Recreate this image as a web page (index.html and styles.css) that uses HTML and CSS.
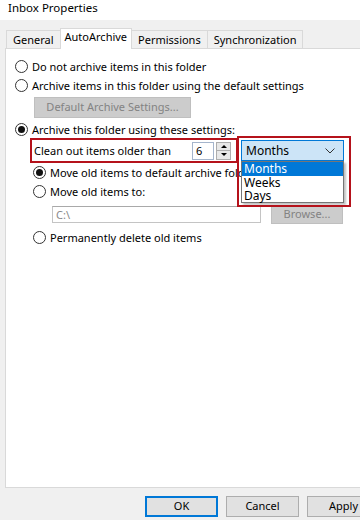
FILE: index.html
```html
<!DOCTYPE html>
<html lang="en">
<head>
    <meta charset="UTF-8">
    <meta name="viewport" content="width=device-width, initial-scale=1.0">
    <title>Inbox Properties</title>
    <link rel="stylesheet" href="styles.css">
</head>
<body>
    <div class="dialog">
        <div class="titlebar">Inbox Properties</div>
        <div class="tabs">
            <div class="tab">General</div>
            <div class="tab active">AutoArchive</div>
            <div class="tab">Permissions</div>
            <div class="tab">Synchronization</div>
        </div>
        <div class="panel">
            <label class="radio-row"><span class="radio"></span>Do not archive items in this folder</label>
            <label class="radio-row"><span class="radio"></span>Archive items in this folder using the default settings</label>
            <div class="btn disabled default-btn">Default Archive Settings...</div>
            <label class="radio-row top-gap"><span class="radio checked"></span>Archive this folder using these settings:</label>

            <div class="clean-row">
                <div class="mark-box">
                    <span>Clean out items older than</span>
                    <div class="spin">
                        <div class="spin-input">6</div>
                        <div class="spin-btns">
                            <div class="spin-btn"><span class="tri-up"></span></div>
                            <div class="spin-btn"><span class="tri-down"></span></div>
                        </div>
                    </div>
                </div>
                <div class="select">
                    <span>Months</span>
                    <svg class="chevron" width="10" height="6" viewBox="0 0 10 6">
                        <polyline points="0.5,0.5 5,5 9.5,0.5" fill="none" stroke="#333" stroke-width="1"/>
                    </svg>
                    <div class="select-list">
                        <div class="option selected">Months</div>
                        <div class="option">Weeks</div>
                        <div class="option">Days</div>
                    </div>
                    <div class="mark-popup"></div>
                </div>
            </div>

            <div class="sub">
                <label class="radio-row"><span class="radio checked"></span>Move old items to default archive folder</label>
                <label class="radio-row"><span class="radio"></span>Move old items to:</label>
                <div class="path-row">
                    <div class="path-input">C:\</div>
                    <div class="btn disabled browse-btn">Browse...</div>
                </div>
                <label class="radio-row perm"><span class="radio"></span>Permanently delete old items</label>
            </div>
        </div>
        <div class="footer">
            <div class="btn focus">OK</div>
            <div class="btn">Cancel</div>
            <div class="btn">Apply</div>
        </div>
    </div>
</body>
</html>
```

FILE: styles.css
```css
body {
    margin: 0;
    background-color: #f0f0f0;
    font-family: "Noto Sans", "Liberation Sans", sans-serif;
    font-size: 11px;
    color: #000000;
    overflow: hidden;
}
.dialog {
    width: 420px;
}
.titlebar {
    height: 20px;
    box-sizing: border-box;
    padding: 1px 0 0 8px;
    line-height: 14px;
    font-size: 11.5px;
    background-color: #ffffff;
}
.tabs {
    display: flex;
    align-items: flex-end;
    height: 28px;
    padding-left: 6px;
    position: relative;
    z-index: 1;
}
.tab {
    height: 18px;
    line-height: 17px;
    padding: 0 6px;
    border: 1px solid #d9d9d9;
    border-bottom: none;
    margin-right: -1px;
    background-color: #f0f0f0;
    box-sizing: border-box;
}
.tab.active {
    height: 21px;
    padding: 0 4px;
    line-height: 16px;
    margin-bottom: -1px;
    background-color: #ffffff;
}
.panel {
    margin-left: 5px;
    height: 440px;
    box-sizing: border-box;
    border: 1px solid #d9d9d9;
    background-color: #ffffff;
    padding: 8px 0 0 9px;
}
.radio-row {
    display: flex;
    align-items: center;
    height: 19px;
    gap: 4px;
    white-space: nowrap;
}
.radio {
    width: 13px;
    height: 13px;
    box-sizing: border-box;
    border: 1px solid #333333;
    border-radius: 50%;
    background-color: #ffffff;
    position: relative;
    flex-shrink: 0;
}
.radio.checked::after {
    content: "";
    position: absolute;
    left: 2px;
    top: 2px;
    width: 7px;
    height: 7px;
    border-radius: 50%;
    background-color: #111111;
}
.btn {
    height: 21px;
    box-sizing: border-box;
    border: 1px solid #adadad;
    background-color: #e1e1e1;
    text-align: center;
    line-height: 18px;
}
.btn.disabled {
    background-color: #cccccc;
    border-color: #bfbfbf;
    color: #838383;
}
.btn.focus {
    border: 2px solid #0078d7;
    line-height: 16px;
}
.default-btn {
    width: 157px;
    margin: 2px 0 0 19px;
}
.top-gap {
    margin-top: 2px;
}
.clean-row {
    display: flex;
    align-items: center;
    margin: -1px 0 0 15px;
}
.mark-box {
    width: 208px;
    height: 25px;
    box-sizing: border-box;
    border: 2px solid #b5121b;
    display: flex;
    align-items: center;
    justify-content: space-between;
    padding: 0 5px 0 2px;
}
.spin {
    display: flex;
    align-items: center;
    gap: 2px;
}
.spin-input {
    width: 22px;
    height: 18px;
    box-sizing: border-box;
    border: 1px solid #a5b5cc;
    padding-left: 3px;
    line-height: 16px;
}
.spin-btns {
    display: flex;
    flex-direction: column;
    width: 15px;
}
.spin-btn {
    height: 9px;
    box-sizing: border-box;
    border: 1px solid #adadad;
    background-color: #e8e8e8;
    display: flex;
    align-items: center;
    justify-content: center;
}
.spin-btn + .spin-btn {
    border-top: none;
}
.tri-up {
    border-left: 3px solid transparent;
    border-right: 3px solid transparent;
    border-bottom: 3px solid #000000;
}
.tri-down {
    border-left: 3px solid transparent;
    border-right: 3px solid transparent;
    border-top: 3px solid #000000;
}
.select {
    position: relative;
    width: 103px;
    height: 21px;
    box-sizing: border-box;
    margin-left: 3px;
    border: 1px solid #0078d7;
    background-color: #cce4f7;
    display: flex;
    align-items: center;
    justify-content: space-between;
    padding: 0 8px 0 4px;
    font-size: 12px;
}
.select-list {
    position: absolute;
    left: -1px;
    top: 20px;
    width: 103px;
    box-sizing: border-box;
    border: 1px solid #767676;
    background-color: #ffffff;
    box-shadow: 2px 2px 2px rgba(0, 0, 0, 0.25);
    z-index: 2;
}
.option {
    height: 13px;
    line-height: 13px;
    padding-left: 2px;
}
.option.selected {
    height: 14px;
    background-color: #0078d7;
    color: #ffffff;
}
.mark-popup {
    position: absolute;
    left: -5px;
    top: -5px;
    width: 114px;
    height: 71px;
    box-sizing: border-box;
    border: 2px solid #b5121b;
    z-index: 3;
}
.sub {
    margin-left: 18px;
}
.path-row {
    display: flex;
    align-items: center;
    margin: 4px 0 0 19px;
    gap: 10px;
}
.path-input {
    width: 209px;
    height: 17px;
    box-sizing: border-box;
    border: 1px solid #c4c4c4;
    border-top-color: #a9a9a9;
    color: #8a8a8a;
    line-height: 15px;
    padding-left: 3px;
}
.browse-btn {
    width: 72px;
    height: 19px;
    line-height: 16px;
}
.perm {
    margin-top: 4px;
}
.footer {
    display: flex;
    gap: 8px;
    padding: 8px 0 0 145px;
}
.footer .btn {
    width: 73px;
    flex-shrink: 0;
}
```
